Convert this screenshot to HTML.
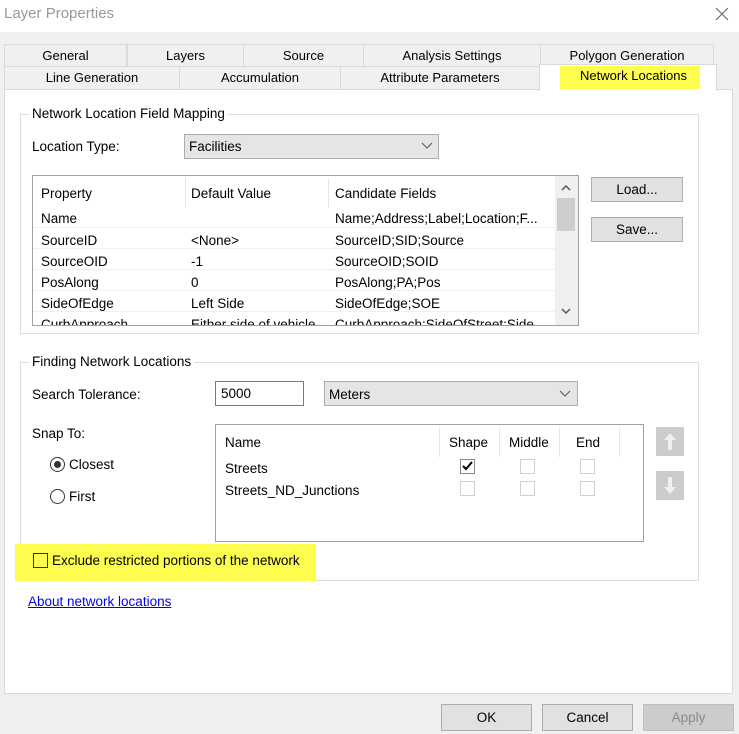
<!DOCTYPE html>
<html><head><meta charset="utf-8"><style>
*{box-sizing:border-box;margin:0;padding:0}
body{width:739px;height:734px;position:relative;background:#f0f0f0;font-family:"Liberation Sans",sans-serif;font-size:13.5px;color:#000;overflow:hidden}
.a{position:absolute}
.t{position:absolute;white-space:nowrap}
.tab{position:absolute;border:1px solid #d9d9d9;background:#f0f0f0;text-align:center;font-size:13px;line-height:21px}
.grp{position:absolute;border:1px solid #dcdcdc}
.lab{position:absolute;background:#fff;padding:0 3px;top:-8px;left:8px;line-height:14px}
.btn{position:absolute;border:1px solid #adadad;background:#e1e1e1;text-align:center;line-height:23px}
.row{position:absolute;left:0;width:523px;height:21px;border-bottom:1px solid #f0f0f0}
.cb{position:absolute;width:15px;height:15px;border:1px solid #d0d0d0;background:#fff}
</style></head><body>
<div class="a" style="left:0;top:0;width:739px;height:32px;background:#fff"></div>
<div class="t" style="left:4px;top:5px;font-size:15px;color:#999">Layer Properties</div>
<svg class="a" style="left:715px;top:7px" width="14" height="14"><path d="M1 1L13 13M13 1L1 13" stroke="#666" stroke-width="1.1"/></svg>

<div class="tab" style="left:4px;top:44px;width:123px;height:23px">General</div>
<div class="tab" style="left:127px;top:44px;width:117px;height:23px">Layers</div>
<div class="tab" style="left:243px;top:44px;width:121px;height:23px">Source</div>
<div class="tab" style="left:363px;top:44px;width:178px;height:23px">Analysis Settings</div>
<div class="tab" style="left:540px;top:44px;width:174px;height:23px">Polygon Generation</div>
<div class="tab" style="left:4px;top:66px;width:176px;height:24px">Line Generation</div>
<div class="tab" style="left:179px;top:66px;width:162px;height:24px">Accumulation</div>
<div class="tab" style="left:340px;top:66px;width:200px;height:24px">Attribute Parameters</div>

<div class="a" style="left:4px;top:89px;width:729px;height:605px;background:#fff;border:1px solid #d9d9d9"></div>
<div class="a" style="left:539px;top:64px;width:178px;height:27px;background:#fff;border:1px solid #d9d9d9;border-bottom:none"></div>
<div class="a" style="left:560px;top:66px;width:140px;height:23px;background:#fdfd4f"></div>
<div class="t" style="left:580px;top:68px;font-size:13px">Network Locations</div>

<div class="grp" style="left:20px;top:114px;width:679px;height:220px"><span class="lab">Network Location Field Mapping</span></div>
<div class="t" style="left:32px;top:139px">Location Type:</div>
<div class="a" style="left:184px;top:134px;width:255px;height:25px;background:#e5e5e5;border:1px solid #adadad"></div>
<div class="t" style="left:189px;top:139px">Facilities</div>
<svg class="a" style="left:421px;top:142px" width="12" height="8"><path d="M1 1L6 6L11 1" fill="none" stroke="#555"/></svg>

<div class="a" style="left:32px;top:175px;width:547px;height:151px;border:1px solid #a0a0a0;background:#fff;overflow:hidden">
 <div class="a" style="left:152px;top:2px;width:1px;height:30px;background:#e5e5e5"></div>
 <div class="a" style="left:295px;top:2px;width:1px;height:30px;background:#e5e5e5"></div>
 <div class="t" style="left:8px;top:10px">Property</div><div class="t" style="left:158px;top:10px">Default Value</div><div class="t" style="left:302px;top:10px">Candidate Fields</div>
 <div class="row" style="top:31px"></div><div class="row" style="top:52px"></div><div class="row" style="top:73px"></div><div class="row" style="top:94px"></div><div class="row" style="top:115px"></div>
 <div class="t" style="left:8px;top:35px">Name</div><div class="t" style="left:302px;top:35px">Name;Address;Label;Location;F...</div>
 <div class="t" style="left:8px;top:57px">SourceID</div><div class="t" style="left:158px;top:57px">&lt;None&gt;</div><div class="t" style="left:302px;top:57px">SourceID;SID;Source</div>
 <div class="t" style="left:8px;top:78px">SourceOID</div><div class="t" style="left:158px;top:78px">-1</div><div class="t" style="left:302px;top:78px">SourceOID;SOID</div>
 <div class="t" style="left:8px;top:99px">PosAlong</div><div class="t" style="left:158px;top:99px">0</div><div class="t" style="left:302px;top:99px">PosAlong;PA;Pos</div>
 <div class="t" style="left:8px;top:120px">SideOfEdge</div><div class="t" style="left:158px;top:120px">Left Side</div><div class="t" style="left:302px;top:120px">SideOfEdge;SOE</div>
 <div class="t" style="left:8px;top:141px">CurbApproach</div><div class="t" style="left:158px;top:141px">Either side of vehicle</div><div class="t" style="left:302px;top:141px">CurbApproach;SideOfStreet;Side</div>
 <div class="a" style="left:522px;top:0;width:23px;height:149px;background:#f0f0f0"></div>
 <div class="a" style="left:524px;top:22px;width:18px;height:33px;background:#cdcdcd"></div>
 <svg class="a" style="left:528px;top:8px" width="10" height="7"><path d="M1 6L5 2L9 6" fill="none" stroke="#555" stroke-width="1.5"/></svg>
 <svg class="a" style="left:528px;top:132px" width="10" height="7"><path d="M1 1L5 5L9 1" fill="none" stroke="#555" stroke-width="1.5"/></svg>
</div>
<div class="btn" style="left:591px;top:177px;width:92px;height:25px">Load...</div>
<div class="btn" style="left:591px;top:217px;width:92px;height:25px">Save...</div>

<div class="grp" style="left:20px;top:362px;width:679px;height:219px"><span class="lab">Finding Network Locations</span></div>
<div class="t" style="left:32px;top:387px">Search Tolerance:</div>
<div class="a" style="left:215px;top:381px;width:89px;height:25px;border:1px solid #7a7a7a;background:#fff"></div>
<div class="t" style="left:221px;top:386px">5000</div>
<div class="a" style="left:324px;top:381px;width:254px;height:25px;background:#e5e5e5;border:1px solid #adadad"></div>
<div class="t" style="left:329px;top:387px">Meters</div>
<svg class="a" style="left:559px;top:390px" width="12" height="8"><path d="M1 1L6 6L11 1" fill="none" stroke="#555"/></svg>
<div class="t" style="left:32px;top:426px">Snap To:</div>
<div class="a" style="left:50px;top:457px;width:15px;height:15px;border:1px solid #333;border-radius:50%;background:#fff"></div>
<div class="a" style="left:54px;top:461px;width:7px;height:7px;border-radius:50%;background:#333"></div>
<div class="t" style="left:69px;top:457px">Closest</div>
<div class="a" style="left:50px;top:489px;width:15px;height:15px;border:1px solid #333;border-radius:50%;background:#fff"></div>
<div class="t" style="left:69px;top:489px">First</div>

<div class="a" style="left:215px;top:424px;width:429px;height:118px;border:1px solid #a0a0a0;background:#fff">
 <div class="a" style="left:223px;top:2px;width:1px;height:30px;background:#e5e5e5"></div>
 <div class="a" style="left:283px;top:2px;width:1px;height:30px;background:#e5e5e5"></div>
 <div class="a" style="left:343px;top:2px;width:1px;height:30px;background:#e5e5e5"></div>
 <div class="a" style="left:403px;top:2px;width:1px;height:30px;background:#e5e5e5"></div>
 <div class="t" style="left:9px;top:10px">Name</div><div class="t" style="left:233px;top:10px">Shape</div><div class="t" style="left:293px;top:10px">Middle</div><div class="t" style="left:360px;top:10px">End</div>
 <div class="t" style="left:9px;top:36px">Streets</div><div class="t" style="left:9px;top:58px">Streets_ND_Junctions</div>
 <div class="cb" style="left:244px;top:34px;border-color:#888"><svg width="13" height="13" style="position:absolute;left:0;top:0"><path d="M2 6L5 9L11 2" fill="none" stroke="#000" stroke-width="2"/></svg></div>
 <div class="cb" style="left:304px;top:34px"></div><div class="cb" style="left:364px;top:34px"></div>
 <div class="cb" style="left:244px;top:56px"></div><div class="cb" style="left:304px;top:56px"></div><div class="cb" style="left:364px;top:56px"></div>
</div>
<div class="a" style="left:656px;top:427px;width:28px;height:29px;background:#cccccc"></div>
<svg class="a" style="left:662px;top:432px" width="16" height="19"><path d="M8 1L14 8H10V18H6V8H2Z" fill="#f0f0f0"/></svg>
<div class="a" style="left:656px;top:471px;width:28px;height:29px;background:#cccccc"></div>
<svg class="a" style="left:662px;top:476px" width="16" height="19"><path d="M8 18L14 11H10V1H6V11H2Z" fill="#f0f0f0"/></svg>

<div class="a" style="left:15px;top:544px;width:301px;height:37px;background:#fdfd4f"></div>
<div class="a" style="left:33px;top:553px;width:15px;height:15px;border:1px solid #333"></div>
<div class="t" style="left:52px;top:553px">Exclude restricted portions of the network</div>
<div class="t" style="left:28px;top:594px;color:#0000ee;text-decoration:underline">About network locations</div>

<div class="btn" style="left:441px;top:704px;width:91px;height:27px;line-height:25px">OK</div>
<div class="btn" style="left:542px;top:704px;width:91px;height:27px;line-height:25px">Cancel</div>
<div class="btn" style="left:643px;top:704px;width:91px;height:27px;line-height:25px;background:#cccccc;border-color:#bfbfbf;color:#8a8a8a">Apply</div>
</body></html>
